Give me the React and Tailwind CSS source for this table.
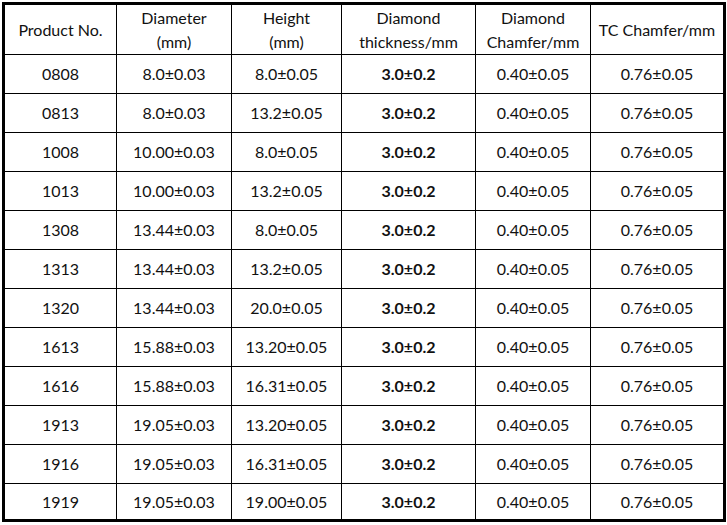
const rows = [
  ["0808", "8.0±0.03", "8.0±0.05"],
  ["0813", "8.0±0.03", "13.2±0.05"],
  ["1008", "10.00±0.03", "8.0±0.05"],
  ["1013", "10.00±0.03", "13.2±0.05"],
  ["1308", "13.44±0.03", "8.0±0.05"],
  ["1313", "13.44±0.03", "13.2±0.05"],
  ["1320", "13.44±0.03", "20.0±0.05"],
  ["1613", "15.88±0.03", "13.20±0.05"],
  ["1616", "15.88±0.03", "16.31±0.05"],
  ["1913", "19.05±0.03", "13.20±0.05"],
  ["1916", "19.05±0.03", "16.31±0.05"],
  ["1919", "19.05±0.03", "19.00±0.05"],
]

const headers = [
  ["Product No."],
  ["Diameter", "(mm)"],
  ["Height", "(mm)"],
  ["Diamond", "thickness/mm"],
  ["Diamond", "Chamfer/mm"],
  ["TC Chamfer/mm"],
]

function Cell({ children, bold = false }) {
  return (
    <div className={`bg-white flex items-center justify-center text-[16px] text-[#111] ${bold ? "font-bold" : ""}`}>
      {children}
    </div>
  )
}

export default function App() {
  return (
    <div className="w-[727px] h-[525px] bg-white pt-[2px] pl-[2px]" style={{ fontFamily: "Lato, 'Open Sans', sans-serif" }}>
      <div className="inline-grid border-[3px] border-black bg-black gap-px grid-cols-[111px_114px_109px_133px_114px_132px] grid-rows-[49px_repeat(11,38px)_35px]">
        {headers.map((h, i) => (
          <div key={i} className="bg-white flex flex-col items-center justify-center text-[16px] leading-[24px] text-[#111]">
            {h.map(line => <span key={line}>{line}</span>)}
          </div>
        ))}
        {rows.map(r => [
          <Cell key={r[0] + "a"}>{r[0]}</Cell>,
          <Cell key={r[0] + "b"}>{r[1]}</Cell>,
          <Cell key={r[0] + "c"}>{r[2]}</Cell>,
          <Cell key={r[0] + "d"} bold>3.0±0.2</Cell>,
          <Cell key={r[0] + "e"}>0.40±0.05</Cell>,
          <Cell key={r[0] + "f"}>0.76±0.05</Cell>,
        ])}
      </div>
    </div>
  )
}
